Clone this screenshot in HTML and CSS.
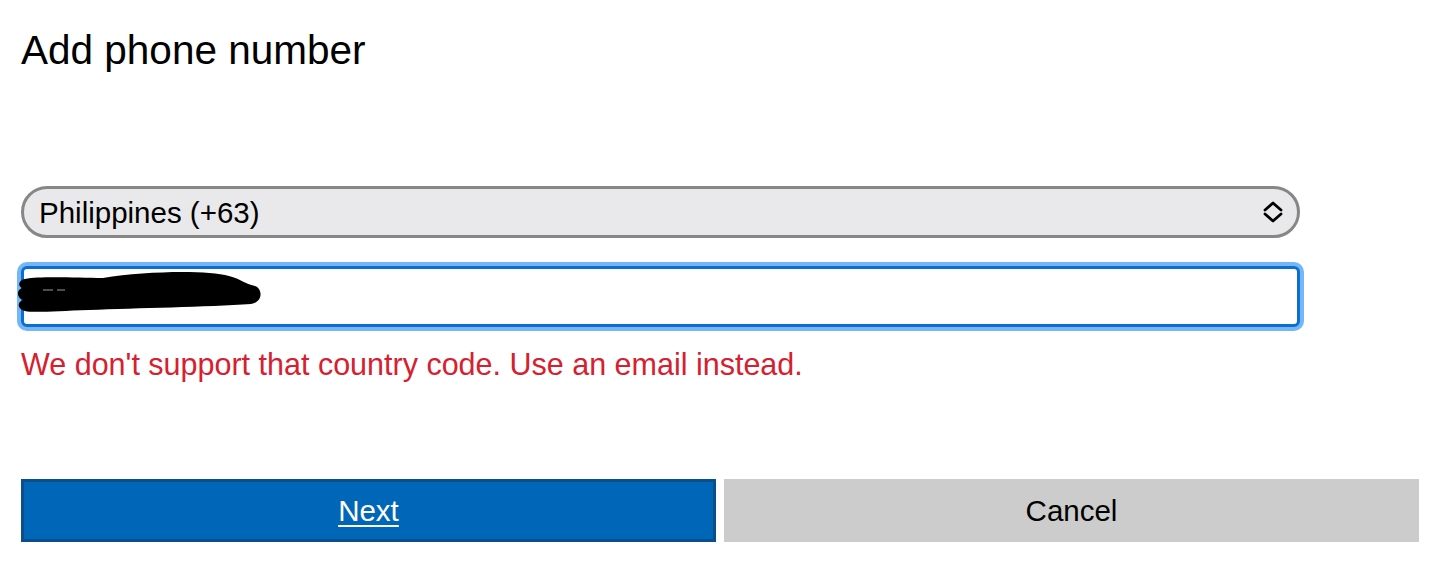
FILE: index.html
```html
<!DOCTYPE html>
<html>
    <head>
        <title>Add phone number</title>
        <meta charset="UTF-8"/>
        <meta name="viewport" content="width=device-width, initial-scale=1.0"/>
        <link rel="stylesheet" href="styles.css">
    </head>
    <body>
        <div class="page">
            <h1 class="title">Add phone number</h1>

            <form name="phoneform" class="phone-form" method="post" action="">
                <div class="select-wrap">
                    <select name="country" class="country">
                        <option>Philippines (+63)</option>
                    </select>
                    <!-- seta do select -->
                    <svg class="chevron" width="22" height="24" viewBox="0 0 22 24">
                        <path d="M3 10 L11 3 L19 10" fill="none" stroke="#000" stroke-width="2.8" stroke-linecap="round" stroke-linejoin="round"/>
                        <path d="M3 14 L11 21 L19 14" fill="none" stroke="#000" stroke-width="2.8" stroke-linecap="round" stroke-linejoin="round"/>
                    </svg>
                </div>

                <div class="input-wrap">
                    <input type="tel" name="phone" class="phone" value="" />
                    <!-- numero escondido -->
                    <svg class="redact" width="246" height="44" viewBox="0 0 246 44">
                        <path d="M8 8 C24 5 60 7 86 7 C130 0 190 -1 212 5 C224 8 228 13 238 15 C246 18 246 31 234 33 C190 36 120 37 72 39 C40 40 16 42 8 40 C0 38 0 31 6 29 C0 27 -1 19 5 17 C0 15 2 9 8 8 Z" fill="#000"/>
                        <path d="M26 19 L36 19 M40 19 L48 19" stroke="#fff" stroke-width="1" opacity="0.6"/>
                    </svg>
                </div>

                <p class="error">We don't support that country code. Use an email instead.</p>

                <div class="buttons">
                    <button type="button" class="btn btn-next">Next</button>
                    <button type="button" class="btn btn-cancel">Cancel</button>
                </div>
            </form>
        </div>
    </body>
</html>
```

FILE: styles.css
```css
body{
    margin: 0;
    background: #fff;
    font-family: "Liberation Sans", Arial, sans-serif;
    color: #000;
}

.page{
    padding: 0 21px;
}

.title{
    margin: 27px 0 0 0;
    font-size: 40.5px;
    font-weight: normal;
    line-height: 47px;
}

.phone-form{
    margin-top: 112px;
}

.select-wrap{
    position: relative;
    width: 1279px;
}

.country{
    appearance: none;
    -webkit-appearance: none;
    display: block;
    width: 100%;
    height: 52px;
    margin: 0;
    padding: 0 0 0 15px;
    border: solid #878787 3px;
    border-radius: 26px;
    background-color: #e9e9eb;
    font-family: "Liberation Sans", Arial, sans-serif;
    font-size: 29.5px;
    color: #000;
}

.chevron{
    position: absolute;
    right: 16px;
    top: 14px;
}

.input-wrap{
    position: relative;
    width: 1279px;
    margin-top: 28px;
}

.phone{
    display: block;
    box-sizing: border-box;
    width: 100%;
    height: 61px;
    margin: 0;
    border: solid #0b6fd0 3px;
    border-radius: 6px;
    box-shadow: 0 0 0 4px #74b6f6;
    background: #fff;
    outline: none;
}

.redact{
    position: absolute;
    left: -4px;
    top: 5px;
}

.error{
    margin: 19px 0 0 0;
    font-size: 30.5px;
    line-height: 36px;
    color: #d6202f;
}

.buttons{
    display: grid;
    grid-template-columns: 1fr 1fr;
    gap: 8px;
    margin-top: 97px;
}

.btn{
    height: 63px;
    margin: 0;
    font-family: "Liberation Sans", Arial, sans-serif;
    font-size: 29.5px;
    cursor: pointer;
}

.btn-next{
    background-color: #0067b8;
    border: solid #0a4f8a 3px;
    color: #fff;
    text-decoration: underline;
    text-underline-offset: 4px;
    text-decoration-thickness: 2px;
}

.btn-cancel{
    background-color: #cccccc;
    border: none;
    color: #000;
}
```
